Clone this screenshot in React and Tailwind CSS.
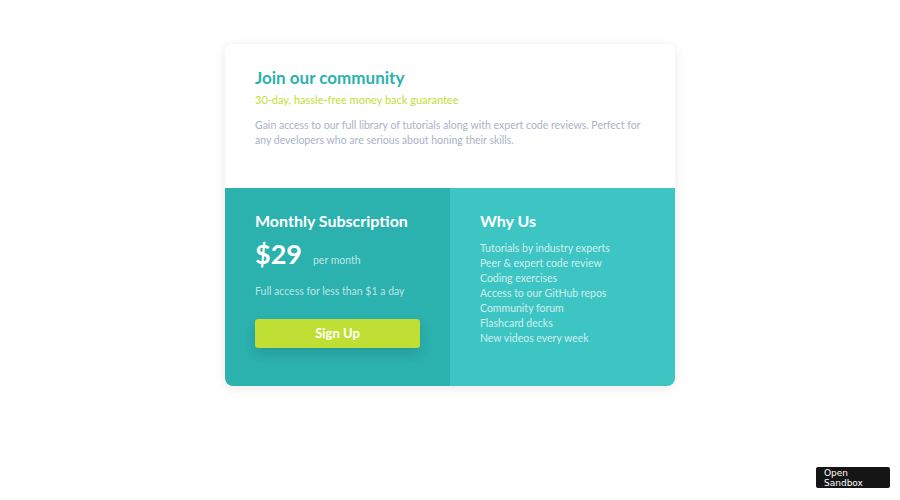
export default function App() {
  const items = [
    "Tutorials by industry experts",
    "Peer & expert code review",
    "Coding exercises",
    "Access to our GitHub repos",
    "Community forum",
    "Flashcard decks",
    "New videos every week",
  ];
  return (
    <div className="w-[900px] h-[500px] bg-white relative" style={{ fontFamily: "Lato, 'Noto Sans', sans-serif" }}>
      <div className="flex justify-center pt-[44px]">
        <div className="w-[450px] rounded-[8px] overflow-hidden shadow-[0_2px_12px_rgba(0,0,0,0.09)]">
          <div className="bg-white px-[30px] pt-[23px] pb-[40px]">
            <h1 className="text-[17px] leading-[22px] font-bold text-[#2bb1ae]">Join our community</h1>
            <p className="mt-[3px] text-[11px] leading-[15px] text-[#c0df34]">30-day, hassle-free money back guarantee</p>
            <p className="mt-[11px] text-[10.5px] leading-[15px] text-[#a9b3c6]">
              Gain access to our full library of tutorials along with expert code reviews. Perfect for any developers who are serious about honing their skills.
            </p>
          </div>
          <div className="grid grid-cols-2 h-[198px]">
            <div className="bg-[#2bb1ae] px-[30px] pt-[23px]">
              <h2 className="text-[16px] leading-[20px] font-bold text-white">Monthly Subscription</h2>
              <div className="mt-[7px] flex items-baseline">
                <span className="text-[27px] leading-[32px] font-bold text-white">$29</span>
                <span className="ml-[11px] text-[10.5px] text-white/70">per month</span>
              </div>
              <p className="mt-[14px] text-[10.5px] leading-[15px] text-white/70">Full access for less than $1 a day</p>
              <button className="mt-[20px] w-[165px] h-[29px] rounded-[3px] bg-[#c0df34] text-white text-[13px] font-bold shadow-[0_6px_12px_rgba(0,0,0,0.12)]">
                Sign Up
              </button>
            </div>
            <div className="bg-[#3dc5c4] px-[30px] pt-[23px]">
              <h2 className="text-[16px] leading-[20px] font-bold text-white">Why Us</h2>
              <ul className="mt-[10px]">
                {items.map((t) => (
                  <li key={t} className="text-[10.5px] leading-[15px] text-white/75">{t}</li>
                ))}
              </ul>
            </div>
          </div>
        </div>
      </div>
      <div className="absolute left-[816px] top-[467px] w-[74px] h-[21px] bg-[#151515] rounded-[2px] text-white text-[9px] leading-[10px] px-[8px] pt-[1px]" style={{ fontFamily: "'DejaVu Sans', sans-serif" }}>
        Open<br />Sandbox
      </div>
    </div>
  );
}
